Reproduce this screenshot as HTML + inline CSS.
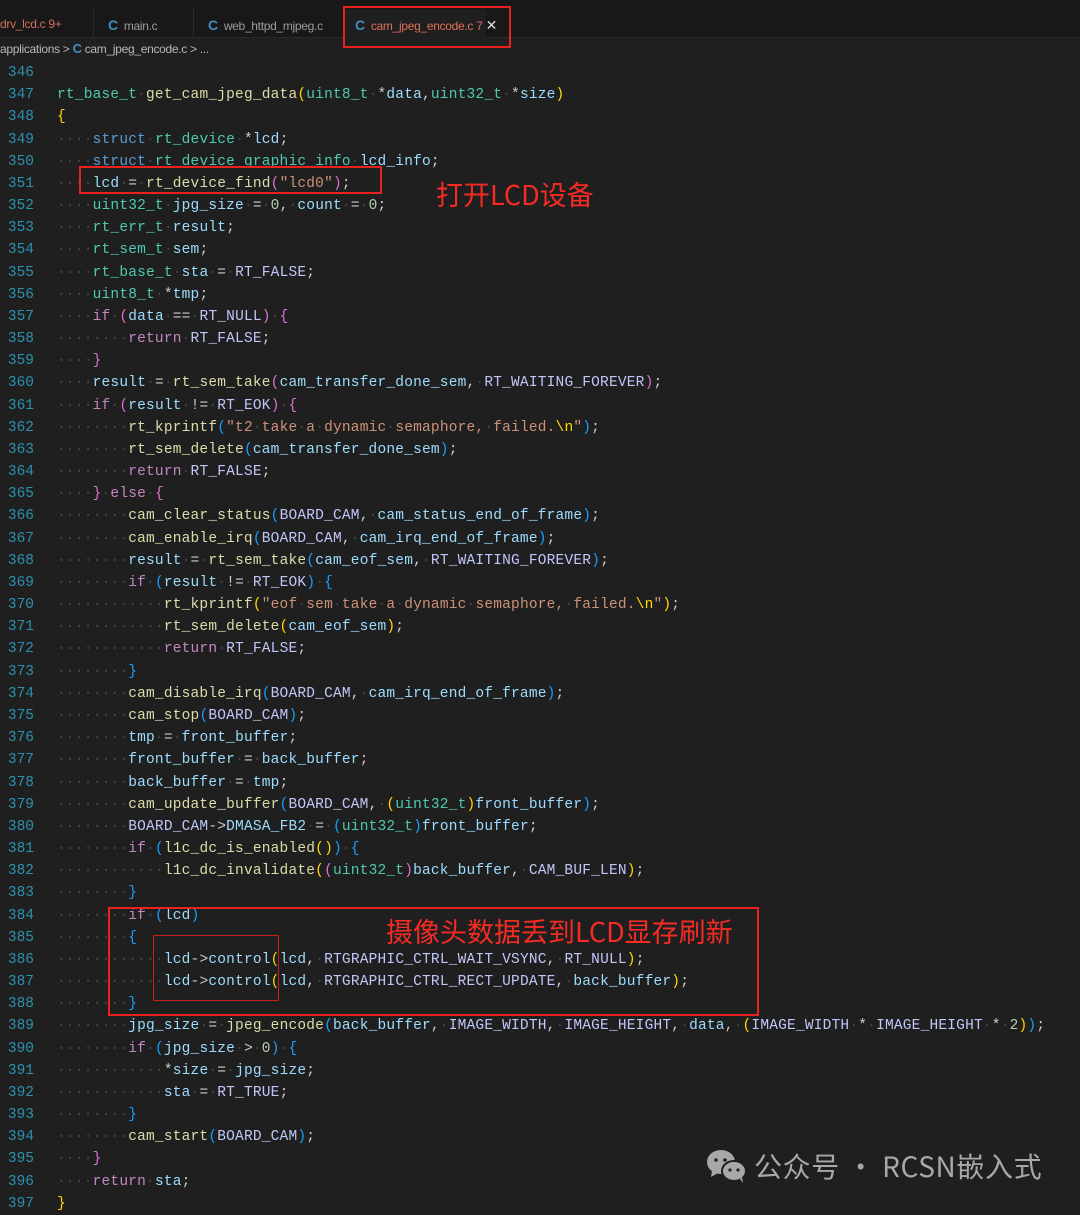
<!DOCTYPE html>
<html><head><meta charset="utf-8"><style>
*{margin:0;padding:0;box-sizing:border-box}
body{width:1080px;height:1212px;background:#1f1f1f;overflow:hidden;position:relative;font-family:"Liberation Sans","Noto Sans CJK SC",sans-serif}
.tabs{position:absolute;left:0;top:0;width:1080px;height:38px;background:#181818;border-bottom:1px solid #2a2a2a}
.tab{position:absolute;top:9px;height:29px;font-size:12px;color:#9d9d9d;letter-spacing:-0.3px;white-space:nowrap;padding-top:8px}
.tab b{color:#3e8fc5;font-weight:bold;font-size:14px;margin-right:6px}
.sep{position:absolute;top:9px;width:1px;height:29px;background:#2b2b2b}
.crumb{position:absolute;left:0;top:38px;width:1080px;height:22px;font-size:12px;color:#b8b8b8;padding-top:3px;letter-spacing:-0.3px;white-space:nowrap}
.crumb b{color:#3e8fc5;font-size:13px}
.ed{position:absolute;left:0;top:62px;width:1080px}
.l{position:relative;height:22.18px;line-height:22.18px;font-family:"Liberation Mono",monospace;font-size:14.5px;letter-spacing:0.2px;white-space:pre;color:#cccccc}
.ln{position:absolute;left:0;width:34px;text-align:right;color:#2b91af;letter-spacing:0}
.c{position:absolute;left:57px}
i{font-style:normal;color:#454545}
.k{color:#c586c0}.t{color:#4ec9b0}.f{color:#dcdcaa}.v{color:#9cdcfe}.m{color:#c0c6f8}.n{color:#b5cea8}.s{color:#ce9178}.y{color:#ffd700}.p{color:#da70d6}.b{color:#179fff}.kw{color:#569cd6}
.box{position:absolute;border:2px solid #e8231f}
.ann{position:absolute;color:#f52b24;font-size:27px;font-family:"Noto Sans CJK SC",sans-serif;white-space:nowrap}
.wm{position:absolute;left:706px;top:1146px;color:#a8a8a8;font-size:28px;font-family:"Noto Sans CJK SC",sans-serif;white-space:nowrap;letter-spacing:0.6px}
</style></head><body>
<div class="tabs">
<div class="tab" style="left:0"><span style="color:#d0705a">drv_lcd.c 9+</span></div>
<div class="sep" style="left:93px"></div>
<div class="tab" style="left:108px"><b>C</b>main.c</div>
<div class="sep" style="left:193px"></div>
<div class="tab" style="left:208px"><b>C</b>web_httpd_mjpeg.c</div>
<div class="tab" style="left:343px;width:143px;background:#1f1f1f;padding-left:12px"><b>C</b><span style="color:#e0705a">cam_jpeg_encode.c 7</span> <span style="color:#ddd;font-size:14px">✕</span></div>
</div>
<div class="box" style="left:343px;top:6px;width:168px;height:42px"></div>
<div class="crumb">applications &gt; <b>C</b> cam_jpeg_encode.c &gt; ...</div>
<div class="ed">
<div class="l"><span class="ln">346</span><span class="c"></span></div>
<div class="l"><span class="ln">347</span><span class="c"><span class="t">rt_base_t</span><i>·</i><span class="f">get_cam_jpeg_data</span><span class="y">(</span><span class="t">uint8_t</span><i>·</i>*<span class="v">data</span>,<span class="t">uint32_t</span><i>·</i>*<span class="v">size</span><span class="y">)</span></span></div>
<div class="l"><span class="ln">348</span><span class="c"><span class="y">{</span></span></div>
<div class="l"><span class="ln">349</span><span class="c"><i>····</i><span class="kw">struct</span><i>·</i><span class="t">rt_device</span><i>·</i>*<span class="v">lcd</span>;</span></div>
<div class="l"><span class="ln">350</span><span class="c"><i>····</i><span class="kw">struct</span><i>·</i><span class="t">rt_device_graphic_info</span><i>·</i><span class="v">lcd_info</span>;</span></div>
<div class="l"><span class="ln">351</span><span class="c"><i>····</i><span class="v">lcd</span><i>·</i>=<i>·</i><span class="f">rt_device_find</span><span class="p">(</span><span class="s">"lcd0"</span><span class="p">)</span>;</span></div>
<div class="l"><span class="ln">352</span><span class="c"><i>····</i><span class="t">uint32_t</span><i>·</i><span class="v">jpg_size</span><i>·</i>=<i>·</i><span class="n">0</span>,<i>·</i><span class="v">count</span><i>·</i>=<i>·</i><span class="n">0</span>;</span></div>
<div class="l"><span class="ln">353</span><span class="c"><i>····</i><span class="t">rt_err_t</span><i>·</i><span class="v">result</span>;</span></div>
<div class="l"><span class="ln">354</span><span class="c"><i>····</i><span class="t">rt_sem_t</span><i>·</i><span class="v">sem</span>;</span></div>
<div class="l"><span class="ln">355</span><span class="c"><i>····</i><span class="t">rt_base_t</span><i>·</i><span class="v">sta</span><i>·</i>=<i>·</i><span class="m">RT_FALSE</span>;</span></div>
<div class="l"><span class="ln">356</span><span class="c"><i>····</i><span class="t">uint8_t</span><i>·</i>*<span class="v">tmp</span>;</span></div>
<div class="l"><span class="ln">357</span><span class="c"><i>····</i><span class="k">if</span><i>·</i><span class="p">(</span><span class="v">data</span><i>·</i>==<i>·</i><span class="m">RT_NULL</span><span class="p">)</span><i>·</i><span class="p">{</span></span></div>
<div class="l"><span class="ln">358</span><span class="c"><i>········</i><span class="k">return</span><i>·</i><span class="m">RT_FALSE</span>;</span></div>
<div class="l"><span class="ln">359</span><span class="c"><i>····</i><span class="p">}</span></span></div>
<div class="l"><span class="ln">360</span><span class="c"><i>····</i><span class="v">result</span><i>·</i>=<i>·</i><span class="f">rt_sem_take</span><span class="p">(</span><span class="v">cam_transfer_done_sem</span>,<i>·</i><span class="m">RT_WAITING_FOREVER</span><span class="p">)</span>;</span></div>
<div class="l"><span class="ln">361</span><span class="c"><i>····</i><span class="k">if</span><i>·</i><span class="p">(</span><span class="v">result</span><i>·</i>!=<i>·</i><span class="m">RT_EOK</span><span class="p">)</span><i>·</i><span class="p">{</span></span></div>
<div class="l"><span class="ln">362</span><span class="c"><i>········</i><span class="f">rt_kprintf</span><span class="b">(</span><span class="s">"t2<i>·</i>take<i>·</i>a<i>·</i>dynamic<i>·</i>semaphore,<i>·</i>failed.<span class="y">\n</span>"</span><span class="b">)</span>;</span></div>
<div class="l"><span class="ln">363</span><span class="c"><i>········</i><span class="f">rt_sem_delete</span><span class="b">(</span><span class="v">cam_transfer_done_sem</span><span class="b">)</span>;</span></div>
<div class="l"><span class="ln">364</span><span class="c"><i>········</i><span class="k">return</span><i>·</i><span class="m">RT_FALSE</span>;</span></div>
<div class="l"><span class="ln">365</span><span class="c"><i>····</i><span class="p">}</span><i>·</i><span class="k">else</span><i>·</i><span class="p">{</span></span></div>
<div class="l"><span class="ln">366</span><span class="c"><i>········</i><span class="f">cam_clear_status</span><span class="b">(</span><span class="m">BOARD_CAM</span>,<i>·</i><span class="v">cam_status_end_of_frame</span><span class="b">)</span>;</span></div>
<div class="l"><span class="ln">367</span><span class="c"><i>········</i><span class="f">cam_enable_irq</span><span class="b">(</span><span class="m">BOARD_CAM</span>,<i>·</i><span class="v">cam_irq_end_of_frame</span><span class="b">)</span>;</span></div>
<div class="l"><span class="ln">368</span><span class="c"><i>········</i><span class="v">result</span><i>·</i>=<i>·</i><span class="f">rt_sem_take</span><span class="b">(</span><span class="v">cam_eof_sem</span>,<i>·</i><span class="m">RT_WAITING_FOREVER</span><span class="b">)</span>;</span></div>
<div class="l"><span class="ln">369</span><span class="c"><i>········</i><span class="k">if</span><i>·</i><span class="b">(</span><span class="v">result</span><i>·</i>!=<i>·</i><span class="m">RT_EOK</span><span class="b">)</span><i>·</i><span class="b">{</span></span></div>
<div class="l"><span class="ln">370</span><span class="c"><i>············</i><span class="f">rt_kprintf</span><span class="y">(</span><span class="s">"eof<i>·</i>sem<i>·</i>take<i>·</i>a<i>·</i>dynamic<i>·</i>semaphore,<i>·</i>failed.<span class="y">\n</span>"</span><span class="y">)</span>;</span></div>
<div class="l"><span class="ln">371</span><span class="c"><i>············</i><span class="f">rt_sem_delete</span><span class="y">(</span><span class="v">cam_eof_sem</span><span class="y">)</span>;</span></div>
<div class="l"><span class="ln">372</span><span class="c"><i>············</i><span class="k">return</span><i>·</i><span class="m">RT_FALSE</span>;</span></div>
<div class="l"><span class="ln">373</span><span class="c"><i>········</i><span class="b">}</span></span></div>
<div class="l"><span class="ln">374</span><span class="c"><i>········</i><span class="f">cam_disable_irq</span><span class="b">(</span><span class="m">BOARD_CAM</span>,<i>·</i><span class="v">cam_irq_end_of_frame</span><span class="b">)</span>;</span></div>
<div class="l"><span class="ln">375</span><span class="c"><i>········</i><span class="f">cam_stop</span><span class="b">(</span><span class="m">BOARD_CAM</span><span class="b">)</span>;</span></div>
<div class="l"><span class="ln">376</span><span class="c"><i>········</i><span class="v">tmp</span><i>·</i>=<i>·</i><span class="v">front_buffer</span>;</span></div>
<div class="l"><span class="ln">377</span><span class="c"><i>········</i><span class="v">front_buffer</span><i>·</i>=<i>·</i><span class="v">back_buffer</span>;</span></div>
<div class="l"><span class="ln">378</span><span class="c"><i>········</i><span class="v">back_buffer</span><i>·</i>=<i>·</i><span class="v">tmp</span>;</span></div>
<div class="l"><span class="ln">379</span><span class="c"><i>········</i><span class="f">cam_update_buffer</span><span class="b">(</span><span class="m">BOARD_CAM</span>,<i>·</i><span class="y">(</span><span class="t">uint32_t</span><span class="y">)</span><span class="v">front_buffer</span><span class="b">)</span>;</span></div>
<div class="l"><span class="ln">380</span><span class="c"><i>········</i><span class="m">BOARD_CAM</span>-&gt;<span class="v">DMASA_FB2</span><i>·</i>=<i>·</i><span class="b">(</span><span class="t">uint32_t</span><span class="b">)</span><span class="v">front_buffer</span>;</span></div>
<div class="l"><span class="ln">381</span><span class="c"><i>········</i><span class="k">if</span><i>·</i><span class="b">(</span><span class="f">l1c_dc_is_enabled</span><span class="y">()</span><span class="b">)</span><i>·</i><span class="b">{</span></span></div>
<div class="l"><span class="ln">382</span><span class="c"><i>············</i><span class="f">l1c_dc_invalidate</span><span class="y">(</span><span class="p">(</span><span class="t">uint32_t</span><span class="p">)</span><span class="v">back_buffer</span>,<i>·</i><span class="m">CAM_BUF_LEN</span><span class="y">)</span>;</span></div>
<div class="l"><span class="ln">383</span><span class="c"><i>········</i><span class="b">}</span></span></div>
<div class="l"><span class="ln">384</span><span class="c"><i>········</i><span class="k">if</span><i>·</i><span class="b">(</span><span class="v">lcd</span><span class="b">)</span></span></div>
<div class="l"><span class="ln">385</span><span class="c"><i>········</i><span class="b">{</span></span></div>
<div class="l"><span class="ln">386</span><span class="c"><i>············</i><span class="v">lcd</span>-&gt;<span class="v">control</span><span class="y">(</span><span class="v">lcd</span>,<i>·</i><span class="m">RTGRAPHIC_CTRL_WAIT_VSYNC</span>,<i>·</i><span class="m">RT_NULL</span><span class="y">)</span>;</span></div>
<div class="l"><span class="ln">387</span><span class="c"><i>············</i><span class="v">lcd</span>-&gt;<span class="v">control</span><span class="y">(</span><span class="v">lcd</span>,<i>·</i><span class="m">RTGRAPHIC_CTRL_RECT_UPDATE</span>,<i>·</i><span class="v">back_buffer</span><span class="y">)</span>;</span></div>
<div class="l"><span class="ln">388</span><span class="c"><i>········</i><span class="b">}</span></span></div>
<div class="l"><span class="ln">389</span><span class="c"><i>········</i><span class="v">jpg_size</span><i>·</i>=<i>·</i><span class="f">jpeg_encode</span><span class="b">(</span><span class="v">back_buffer</span>,<i>·</i><span class="m">IMAGE_WIDTH</span>,<i>·</i><span class="m">IMAGE_HEIGHT</span>,<i>·</i><span class="v">data</span>,<i>·</i><span class="y">(</span><span class="m">IMAGE_WIDTH</span><i>·</i>*<i>·</i><span class="m">IMAGE_HEIGHT</span><i>·</i>*<i>·</i><span class="n">2</span><span class="y">)</span><span class="b">)</span>;</span></div>
<div class="l"><span class="ln">390</span><span class="c"><i>········</i><span class="k">if</span><i>·</i><span class="b">(</span><span class="v">jpg_size</span><i>·</i>&gt;<i>·</i><span class="n">0</span><span class="b">)</span><i>·</i><span class="b">{</span></span></div>
<div class="l"><span class="ln">391</span><span class="c"><i>············</i>*<span class="v">size</span><i>·</i>=<i>·</i><span class="v">jpg_size</span>;</span></div>
<div class="l"><span class="ln">392</span><span class="c"><i>············</i><span class="v">sta</span><i>·</i>=<i>·</i><span class="m">RT_TRUE</span>;</span></div>
<div class="l"><span class="ln">393</span><span class="c"><i>········</i><span class="b">}</span></span></div>
<div class="l"><span class="ln">394</span><span class="c"><i>········</i><span class="f">cam_start</span><span class="b">(</span><span class="m">BOARD_CAM</span><span class="b">)</span>;</span></div>
<div class="l"><span class="ln">395</span><span class="c"><i>····</i><span class="p">}</span></span></div>
<div class="l"><span class="ln">396</span><span class="c"><i>····</i><span class="k">return</span><i>·</i><span class="v">sta</span>;</span></div>
<div class="l"><span class="ln">397</span><span class="c"><span class="y">}</span></span></div>
</div>
<div class="box" style="left:79px;top:166px;width:303px;height:28px"></div>
<div class="ann" style="left:436px;top:174px">打开LCD设备</div>
<div class="box" style="left:108px;top:907px;width:651px;height:109px"></div>
<div class="box" style="left:153px;top:935px;width:126px;height:66px;border-width:1px;border-color:#c02020"></div>
<div class="ann" style="left:386px;top:911px">摄像头数据丢到LCD显存刷新</div>
<div class="wm"><svg width="42" height="34" viewBox="0 0 42 34" style="vertical-align:-6px;margin-right:6px"><ellipse cx="15" cy="13" rx="14" ry="12" fill="#a8a8a8"/><path d="M6 22 L5 28 L12 24Z" fill="#a8a8a8"/><ellipse cx="28" cy="22" rx="12" ry="10" fill="#a8a8a8" stroke="#1f1f1f" stroke-width="2"/><path d="M34 30 L37 34 L36 28Z" fill="#a8a8a8"/><circle cx="10" cy="11" r="1.8" fill="#1f1f1f"/><circle cx="19" cy="11" r="1.8" fill="#1f1f1f"/><circle cx="24" cy="21" r="1.6" fill="#1f1f1f"/><circle cx="32" cy="21" r="1.6" fill="#1f1f1f"/></svg>公众号 · RCSN嵌入式</div>
</body></html>
